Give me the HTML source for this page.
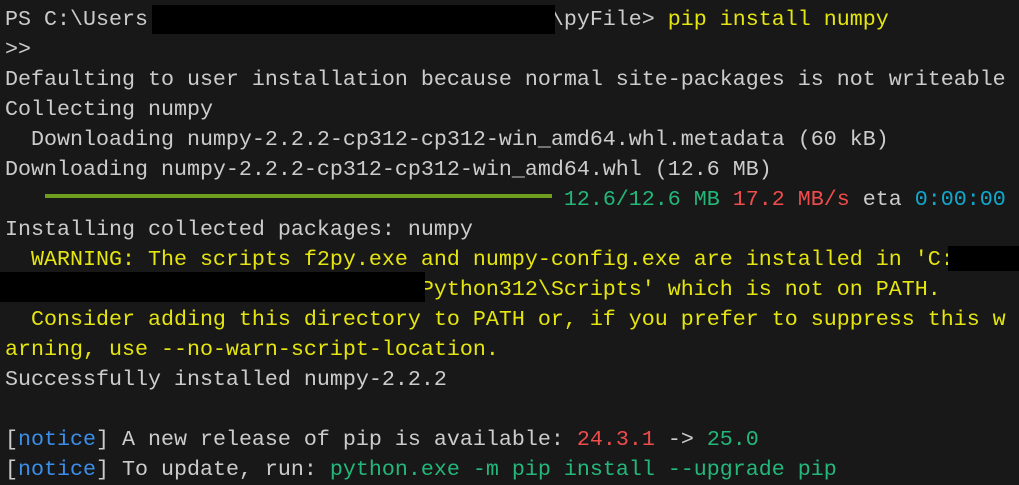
<!DOCTYPE html><html><head><style>
body{margin:0;background:#181818;width:1019px;height:477px;overflow:hidden;position:relative}
pre{margin:0;position:absolute;left:5px;top:5px;font-family:"Liberation Mono",monospace;font-size:21.67px;line-height:30px;color:#cccccc}
.y{color:#e5e510}.g{color:#23b87a}.r{color:#f14c4c}.c{color:#11a8cd}.b{color:#3b8eea}
.k{position:absolute;background:#000}
</style></head><body>
<pre>PS C:\Users                               \pyFile&gt; <span class="y">pip install numpy</span>
&gt;&gt;
Defaulting to user installation because normal site-packages is not writeable
Collecting numpy
  Downloading numpy-2.2.2-cp312-cp312-win_amd64.whl.metadata (60 kB)
Downloading numpy-2.2.2-cp312-cp312-win_amd64.whl (12.6 MB)
                                           <span class="g">12.6/12.6 MB</span> <span class="r">17.2 MB/s</span> eta <span class="c">0:00:00</span>
Installing collected packages: numpy
<span class="y">  WARNING: The scripts f2py.exe and numpy-config.exe are installed in 'C:
                                Python312\Scripts' which is not on PATH.
  Consider adding this directory to PATH or, if you prefer to suppress this w
arning, use --no-warn-script-location.</span>
Successfully installed numpy-2.2.2

[<span class="b">notice</span>] A new release of pip is available: <span class="r">24.3.1</span> -&gt; <span class="g">25.0</span>
[<span class="b">notice</span>] To update, run: <span class="g">python.exe -m pip install --upgrade pip</span></pre>
<div class="k" style="left:152px;top:5px;width:403px;height:29px"></div>
<div style="position:absolute;left:45px;top:194px;width:507px;height:4px;background:#6f9d20"></div>
<div class="k" style="left:948px;top:246px;width:71px;height:25px"></div>
<div class="k" style="left:0;top:272px;width:425px;height:30px"></div>
</body></html>
